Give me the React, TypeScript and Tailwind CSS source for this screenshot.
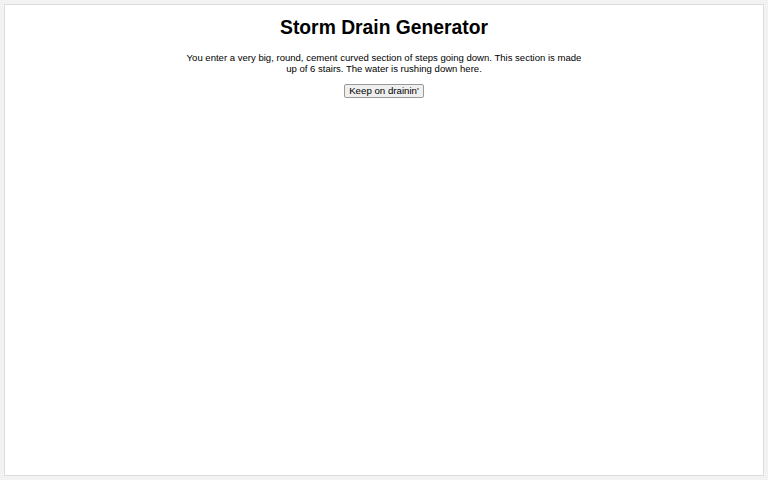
const App = () => {
  return (
    <div className="h-[480px] w-[768px] bg-[#f2f2f2] p-[4px] font-['Liberation_Sans',Arial,sans-serif] text-black">
      <div className="flex h-full flex-col items-center border border-[#dcdcdc] bg-white pt-[11px]">
        <h1 className="text-[19.3px] font-bold leading-[24px]">Storm Drain Generator</h1>
        <p className="mt-[12px] whitespace-nowrap text-center text-[9.55px] leading-[11px]">
          You enter a very big, round, cement curved section of steps going down. This section is made
          <br />
          up of 6 stairs. The water is rushing down here.
        </p>
        <button className="mt-[10px] rounded-[2px] border border-[#9a9a9a] bg-[#efefef] px-[4px] text-[9.7px] leading-[12px]">
          Keep on drainin'
        </button>
      </div>
    </div>
  );
};

export default App;
